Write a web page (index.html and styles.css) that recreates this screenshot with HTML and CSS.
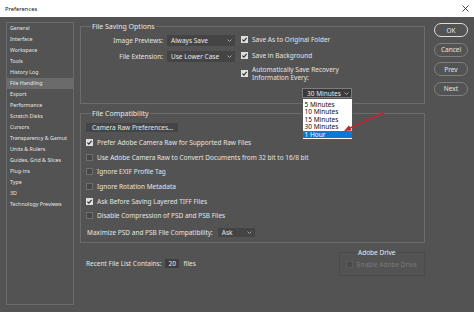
FILE: index.html
```html
<!DOCTYPE html>
<html>
<head>
<meta charset="utf-8">
<link rel="stylesheet" href="styles.css">
</head>
<body>
<div class="window">
  <div class="titlebar">
    <span class="title">Preferences</span>
    <svg class="close" width="7" height="7" viewBox="0 0 7 7"><path d="M0.5 0.5 L6.5 6.5 M6.5 0.5 L0.5 6.5" stroke="#222" stroke-width="0.8" fill="none"/></svg>
  </div>
  <div class="body">
    <ul class="sidebar">
      <li>General</li>
      <li>Interface</li>
      <li>Workspace</li>
      <li>Tools</li>
      <li>History Log</li>
      <li class="active">File Handling</li>
      <li>Export</li>
      <li>Performance</li>
      <li>Scratch Disks</li>
      <li>Cursors</li>
      <li>Transparency &amp; Gamut</li>
      <li>Units &amp; Rulers</li>
      <li>Guides, Grid &amp; Slices</li>
      <li>Plug-ins</li>
      <li>Type</li>
      <li>3D</li>
      <li>Technology Previews</li>
    </ul>
    <div class="content">
      <fieldset class="group saving">
        <legend>File Saving Options</legend>
        <div class="saving-inner">
          <div class="fields">
            <div class="field">
              <span class="label">Image Previews:</span>
              <div class="select wide"><span>Always Save</span><svg class="caret" width="5" height="3" viewBox="0 0 5 3"><path d="M0.5 0.5 L2.5 2.5 L4.5 0.5" stroke="#b5b5b5" stroke-width="0.8" fill="none"/></svg></div>
            </div>
            <div class="field">
              <span class="label">File Extension:</span>
              <div class="select wide"><span>Use Lower Case</span><svg class="caret" width="5" height="3" viewBox="0 0 5 3"><path d="M0.5 0.5 L2.5 2.5 L4.5 0.5" stroke="#b5b5b5" stroke-width="0.8" fill="none"/></svg></div>
            </div>
          </div>
          <div class="checks">
            <div class="check on"><span class="box"><svg width="7" height="7" viewBox="0 0 7 7"><path d="M1.4 3.6 L2.9 5.1 L5.6 1.9" stroke="#333" stroke-width="1.2" fill="none"/></svg></span><span>Save As to Original Folder</span></div>
            <div class="check on gap"><span class="box"><svg width="7" height="7" viewBox="0 0 7 7"><path d="M1.4 3.6 L2.9 5.1 L5.6 1.9" stroke="#333" stroke-width="1.2" fill="none"/></svg></span><span>Save in Background</span></div>
            <div class="check on gap two"><span class="box"><svg width="7" height="7" viewBox="0 0 7 7"><path d="M1.4 3.6 L2.9 5.1 L5.6 1.9" stroke="#333" stroke-width="1.2" fill="none"/></svg></span><span>Automatically Save Recovery<br>Information Every:</span></div>
            <div class="interval">
              <div class="select open"><span>30 Minutes</span><svg class="caret" width="5" height="3" viewBox="0 0 5 3"><path d="M0.5 0.5 L2.5 2.5 L4.5 0.5" stroke="#c8c8c8" stroke-width="0.8" fill="none"/></svg></div>
              <ul class="menu">
                <li>5 Minutes</li>
                <li>10 Minutes</li>
                <li>15 Minutes</li>
                <li>30 Minutes</li>
                <li class="hl">1 Hour</li>
              </ul>
            </div>
          </div>
        </div>
      </fieldset>
      <fieldset class="group compat">
        <legend>File Compatibility</legend>
        <div class="compat-inner">
          <div class="button">Camera Raw Preferences...</div>
          <div class="check on first"><span class="box"><svg width="7" height="7" viewBox="0 0 7 7"><path d="M1.4 3.6 L2.9 5.1 L5.6 1.9" stroke="#333" stroke-width="1.2" fill="none"/></svg></span><span>Prefer Adobe Camera Raw for Supported Raw Files</span></div>
          <div class="check row"><span class="box"></span><span>Use Adobe Camera Raw to Convert Documents from 32 bit to 16/8 bit</span></div>
          <div class="check row"><span class="box"></span><span>Ignore EXIF Profile Tag</span></div>
          <div class="check row"><span class="box"></span><span>Ignore Rotation Metadata</span></div>
          <div class="check on row"><span class="box"><svg width="7" height="7" viewBox="0 0 7 7"><path d="M1.4 3.6 L2.9 5.1 L5.6 1.9" stroke="#333" stroke-width="1.2" fill="none"/></svg></span><span>Ask Before Saving Layered TIFF Files</span></div>
          <div class="check row"><span class="box"></span><span>Disable Compression of PSD and PSB Files</span></div>
          <div class="field maximize">
            <span>Maximize PSD and PSB File Compatibility:</span>
            <div class="select ask"><span>Ask</span><svg class="caret" width="5" height="3" viewBox="0 0 5 3"><path d="M0.5 0.5 L2.5 2.5 L4.5 0.5" stroke="#b5b5b5" stroke-width="0.8" fill="none"/></svg></div>
          </div>
        </div>
      </fieldset>
      <div class="bottom-row">
        <div class="recent">
          <span>Recent File List Contains:</span>
          <span class="num">20</span>
          <span>files</span>
        </div>
        <fieldset class="group drive">
          <legend>Adobe Drive</legend>
          <div class="check disabled"><span class="box"></span><span>Enable Adobe Drive</span></div>
        </fieldset>
      </div>
    </div>
    <div class="buttons">
      <div class="btn primary">OK</div>
      <div class="btn">Cancel</div>
      <div class="btn">Prev</div>
      <div class="btn">Next</div>
    </div>
  </div>
  <svg class="arrow" width="474" height="312" viewBox="0 0 474 312">
    <line x1="384" y1="112.5" x2="349" y2="128.6" stroke="#c1272d" stroke-width="1.6"/>
    <polygon points="344,131 351.8,130.6 349,125.2" fill="#c1272d"/>
  </svg>
</div>
</body>
</html>
```

FILE: styles.css
```css
* { box-sizing: border-box; }
html, body { margin: 0; padding: 0; }
body {
  width: 474px;
  height: 312px;
  overflow: hidden;
  font-family: "Noto Sans", "Open Sans", sans-serif;
  font-size: 6.5px;
  color: #e4e4e4;
}
.window { position: relative; width: 474px; height: 312px; }
ul { list-style: none; margin: 0; padding: 0; }

.titlebar {
  height: 17px;
  background: #fff;
  display: flex;
  align-items: center;
  justify-content: space-between;
  padding: 0 5px 0 5px;
  color: #111;
  font-size: 5.8px;
}

.body {
  height: 295px;
  background: #535353;
  display: flex;
  padding: 5px 6px 0 6px;
}

.sidebar {
  width: 68px;
  height: 283px;
  border: 1px solid #6b6b6b;
  flex: none;
  font-size: 5.3px;
  color: #e6e6e6;
}
.sidebar li {
  height: 11px;
  line-height: 11px;
  padding-left: 3px;
  white-space: nowrap;
}
.sidebar li.active { background: #6b6b6b; }

.content {
  width: 345px;
  margin-left: 6px;
  flex: none;
  display: flex;
  flex-direction: column;
}

.group {
  margin: 0;
  padding: 0;
  border: 1px solid #6b6b6b;
  min-width: 0;
}
.group legend {
  padding: 0 1px;
  margin-left: 10px;
  line-height: 9px;
  height: 9px;
  font-size: 7px;
  color: #e8e8e8;
}

.saving-inner {
  display: flex;
  padding: 4px 0 5px 0;
}
.fields { display: flex; flex-direction: column; gap: 5px; }
.field { display: flex; align-items: center; }
.label { width: 82px; text-align: right; margin-right: 4px; white-space: nowrap; }

.select {
  display: flex;
  align-items: center;
  justify-content: space-between;
  background: #444444;
  color: #e8e8e8;
  padding: 0 3px 0 4px;
  white-space: nowrap;
}
.select.wide { width: 68px; height: 11px; }
.caret { flex: none; }

.checks { margin-left: 6px; display: flex; flex-direction: column; }
.check { display: flex; align-items: center; height: 9px; white-space: nowrap; }
.check .box {
  width: 7px;
  height: 7px;
  flex: none;
  background: #474747;
  border: 1px solid #6e6e6e;
  margin-right: 4px;
  display: flex;
}
.check.on .box { background: #dedede; border: none; }
.check.gap { margin-top: 6.5px; }
.check.two { height: auto; line-height: 7.7px; }

.interval { position: relative; margin-top: 6.6px; margin-left: 61px; width: 50px; }
.select.open {
  width: 50px;
  height: 10px;
  background: #3a3a3a;
  border: 1px solid #7d7d7d;
  padding: 0 2px 0 4px;
}
.menu {
  position: absolute;
  top: 10px;
  left: 0;
  width: 51px;
  background: #fff;
  border: 1px solid #555;
  padding: 1.5px 0 1px 0;
  color: #111;
  z-index: 2;
}
.menu li { height: 7.5px; line-height: 7.5px; padding-left: 1.5px; }
.menu li.hl { background: #0a78d7; color: #fff; }

.compat { margin-top: 5px; }
.compat-inner { padding: 5px 0 5px 5px; display: flex; flex-direction: column; align-items: flex-start; }
.button {
  height: 9px;
  line-height: 9px;
  width: 92px;
  background: #454545;
  padding-left: 6px;
  white-space: nowrap;
}
.check.first { margin-top: 6px; }
.check.row { margin-top: 5.7px; }
.maximize { margin-top: 7.5px; padding-left: 1px; white-space: nowrap; }
.select.ask { width: 37px; height: 9px; margin-left: 5px; }

.bottom-row { display: flex; justify-content: space-between; margin-top: 5px; }
.recent { display: flex; align-items: center; height: 9px; margin-top: 11px; padding-left: 6px; gap: 4px; white-space: nowrap; }
.num { width: 14px; height: 9px; line-height: 9px; background: #3e3e3e; padding-left: 3px; color: #eee; }

.drive { width: 86px; border-color: #4a4a4a; padding: 0 0 5.8px 6px; }
.drive legend { margin-left: 11px; font-size: 6.5px; }
.drive .check { margin-top: 3px; }
.check.disabled { color: #7a7a7a; }
.check.disabled .box { background: #4a4a4a; border-color: #5a5a5a; }

.buttons {
  width: 34px;
  margin-left: 9px;
  flex: none;
  display: flex;
  flex-direction: column;
  gap: 5.5px;
  padding-top: 1px;
}
.btn {
  height: 14px;
  border: 1px solid #808080;
  border-radius: 7px;
  display: flex;
  align-items: center;
  justify-content: center;
  font-size: 6.5px;
  color: #e4e4e4;
}
.btn.primary { border: 1.5px solid #dcdcdc; }

.arrow { position: absolute; left: 0; top: 0; pointer-events: none; z-index: 3; }
```
